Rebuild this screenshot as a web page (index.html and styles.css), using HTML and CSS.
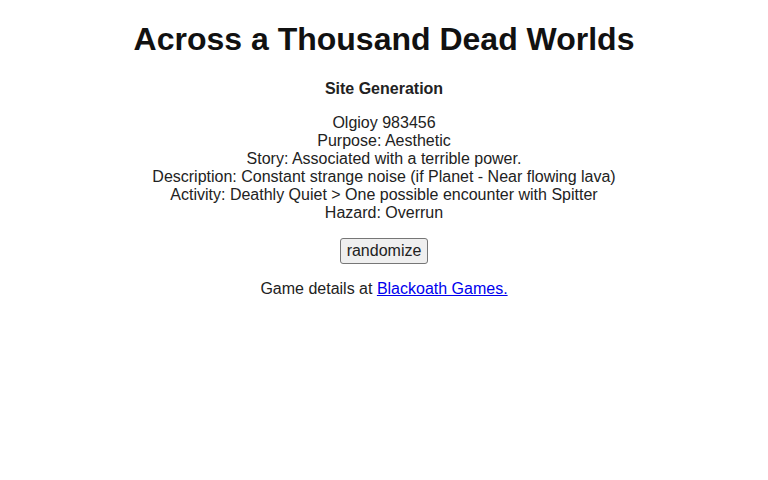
FILE: index.html
```html
<!DOCTYPE html>
<html lang="en">
<head>
    <meta charset="UTF-8">
    <meta name="viewport" content="width=device-width, initial-scale=1.0">
    <title>Across a Thousand Dead Worlds</title>
    <link rel="stylesheet" href="styles.css">
</head>
<body>
    <h1>Across a Thousand Dead Worlds</h1>

    <p class="section-title">Site Generation</p>

    <p id="site">
        Olgioy 983456<br>
        Purpose: Aesthetic<br>
        Story: Associated with a terrible power.<br>
        Description: Constant strange noise (if Planet - Near flowing lava)<br>
        Activity: Deathly Quiet &gt; One possible encounter with Spitter<br>
        Hazard: Overrun
    </p>

    <p><button type="button" id="randomize">randomize</button></p>

    <p>Game details at <a href="#">Blackoath Games.</a></p>
</body>
</html>
```

FILE: styles.css
```css
body {
    font-family: "Liberation Sans", Arial, sans-serif;
    color: #222;
    margin: 0;
    text-align: center;
}

h1 {
    font-size: 2rem;
    color: #111;
}

.section-title {
    font-weight: bold;
}

button {
    font-family: "Liberation Sans", Arial, sans-serif;
    font-size: 1rem;
    color: #222;
    background-color: #efefef;
    border: 1px solid #767676;
    border-radius: 3px;
    padding: 3px 6px;
    vertical-align: middle;
}

a {
    color: #0000ee;
}
```
